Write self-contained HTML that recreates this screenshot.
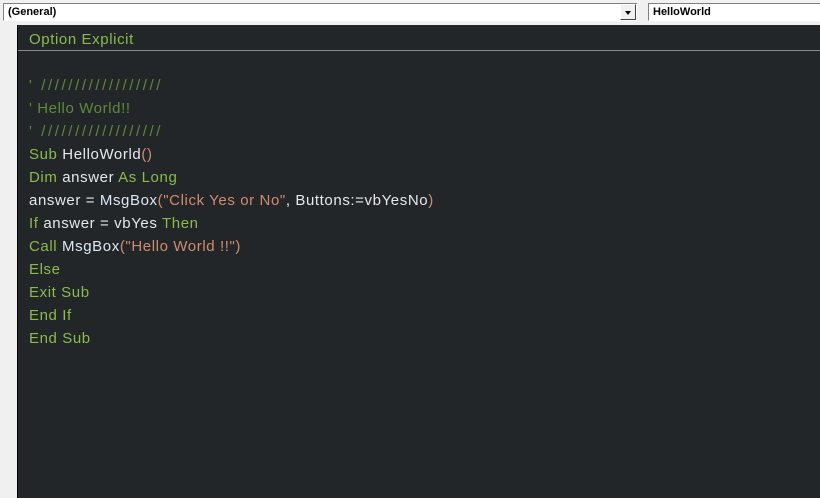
<!DOCTYPE html>
<html><head><meta charset="utf-8"><style>
*{margin:0;padding:0;box-sizing:border-box}
body{width:820px;height:498px;overflow:hidden;background:#f0f0f0;position:relative;font-family:"Liberation Sans","Noto Sans CJK JP",sans-serif}
.combo{position:absolute;top:3px;height:18px;background:#fff;border-top:1px solid #808080;border-left:1px solid #808080;border-bottom:1px solid #fff;font:bold 11px "Liberation Sans",sans-serif;padding:2px 0 0 4px;color:#000}
.btn{position:absolute;left:620px;top:4px;width:16px;height:16px;background:#f0f0f0;border:1px solid #fff;border-right-color:#404040;border-bottom-color:#404040}
.btn:after{content:"";position:absolute;left:4px;top:6px;border-left:3px solid transparent;border-right:3px solid transparent;border-top:4px solid #000}
.ed{position:absolute;left:17px;top:25px;right:0;bottom:0;background:#222628;border-left:1.5px solid #000}
.sep{position:absolute;left:18px;right:0;top:50px;height:1px;background:#8a8c8c}
.l{position:absolute;left:29px;font-size:15px;white-space:pre;line-height:18px;color:#e6e8ea;letter-spacing:0.6px}
.k{color:#8abb4c}.c{color:#5e8a3a}.s{color:#d18c6e}.m{color:#dce8f4}
.sl{letter-spacing:2.6px}
</style></head><body>
<div class="combo" style="left:3px;width:634px">(General)</div>
<div class="btn"></div>
<div class="combo" style="left:648px;width:172px">HelloWorld</div>
<div class="ed"></div>
<div class="sep"></div>
<div class="l k" style="top:31px">Option Explicit</div>
<div class="l c sl" style="top:77px">' //////////////////</div>
<div class="l c" style="top:100px">' Hello World!!</div>
<div class="l c sl" style="top:123px">' //////////////////</div>
<div class="l" style="top:146px"><span class="k">Sub</span> HelloWorld<span class="s">()</span></div>
<div class="l" style="top:169px"><span class="k">Dim</span> answer <span class="k">As Long</span></div>
<div class="l" style="top:192px">answer = <span class="m">MsgBox</span><span class="s">("Click Yes or No"</span>, Buttons:=vbYesNo<span class="s">)</span></div>
<div class="l" style="top:215px"><span class="k">If</span> answer = vbYes <span class="k">Then</span></div>
<div class="l" style="top:238px"><span class="k">Call</span> <span class="m">MsgBox</span><span class="s">("Hello World !!")</span></div>
<div class="l k" style="top:261px">Else</div>
<div class="l k" style="top:284px">Exit Sub</div>
<div class="l k" style="top:307px">End If</div>
<div class="l k" style="top:330px">End Sub</div>
</body></html>
